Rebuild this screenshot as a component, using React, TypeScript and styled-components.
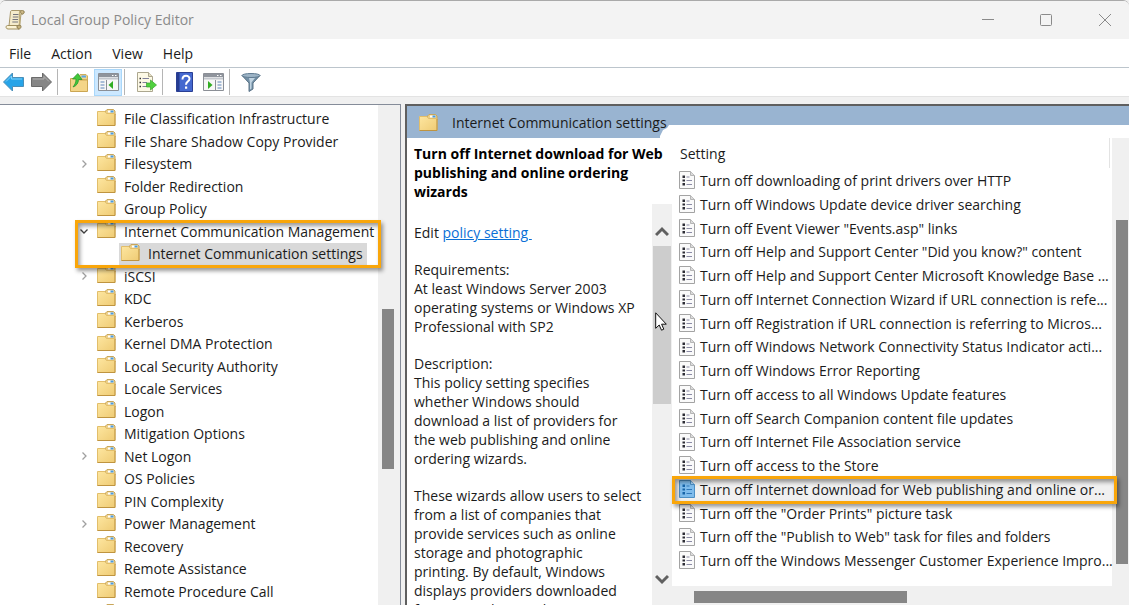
import React from "react";
import styled, { createGlobalStyle, css } from "styled-components";

const GlobalStyle = createGlobalStyle`
  * { box-sizing: border-box; }
  html, body { margin: 0; padding: 0; background: #f0f0f0; }
  body, button, table {
    font-family: "Open Sans", "Noto Sans", sans-serif;
    font-size: 14px;
    color: #1b1b1b;
  }
  button { border: 0; background: none; padding: 0; margin: 0; }
  svg { display: block; flex: none; }
`;

const Window = styled.div`
  display: flex;
  flex-direction: column;
  height: 100vh;
  overflow: hidden;
  background: #f0f0f0;
  border-top: 1px solid #a9a9a9;
  border-radius: 6px 6px 0 0;
`;

const TitleBar = styled.header`
  display: flex;
  align-items: center;
  height: 38px;
  flex: none;
  padding-left: 5px;
  background: #f3f3f3;
`;

const WindowTitle = styled.h1`
  flex: 1;
  margin: 0 0 0 5px;
  padding-bottom: 2px;
  font-size: 14px;
  font-weight: 400;
  color: #8b8b8b;
`;

const WindowButton = styled.button`
  display: flex;
  align-items: center;
  justify-content: center;
  width: 58px;
  height: 38px;
  &:last-child { width: 49px; margin-left: 5px; }
`;

const MenuBar = styled.nav`
  display: flex;
  align-items: center;
  gap: 20px;
  height: 29px;
  flex: none;
  padding: 1px 0 0 9px;
  background: #fff;
  border-bottom: 1px solid #bcc5cc;
`;

const ToolBar = styled.div`
  display: flex;
  align-items: center;
  gap: 1px;
  height: 28px;
  flex: none;
  background: #fff;
`;

const ToolButton = styled.button<{ $narrow?: boolean; $active?: boolean }>`
  display: flex;
  align-items: center;
  justify-content: center;
  width: ${(p) => (p.$narrow ? 27 : 28)}px;
  height: 27px;
  ${(p) =>
    p.$active &&
    css`
      background: #cce8ff;
      border: 1px solid #a9d7fa;
    `}
`;

const Separator = styled.span`
  width: 1px;
  height: 26px;
  margin: 0 6px 0 1px;
  background: #b5b5b5;
`;

const Workspace = styled.main`
  display: flex;
  gap: 4px;
  flex: 1;
  min-height: 0;
  border-top: 1px solid #e3e3e3;
  padding-top: 7px;
`;

const TreePane = styled.section`
  display: flex;
  width: 401px;
  flex: none;
  overflow: hidden;
  background: #fff;
  border-top: 1px solid #858c99;
  border-right: 1px solid #858c99;
`;

const Tree = styled.ul`
  flex: 1;
  list-style: none;
  margin: 0;
  padding: 2px 0 0 79px;
`;

const TreeItem = styled.li<{ $nested?: boolean }>`
  display: flex;
  align-items: center;
  position: relative;
  height: 23px;
  padding-left: ${(p) => (p.$nested ? 24 : 0)}px;
  &:nth-child(even) { height: 22px; }
`;

const Expander = styled.button`
  display: flex;
  align-items: center;
  justify-content: center;
  width: 10px;
  height: 18px;
  margin-right: 8px;
`;

const TreeLabel = styled.button<{ $selected?: boolean }>`
  display: flex;
  align-items: center;
  gap: 8px;
  height: 22px;
  padding-right: 4px;
  white-space: nowrap;
  ${(p) =>
    p.$selected &&
    css`
      margin-left: -2px;
      padding-left: 2px;
      background: #d9d9d9;
    `}
  svg { margin-bottom: 3px; }
`;

const Highlight = styled.span`
  position: absolute;
  z-index: 3;
  pointer-events: none;
  border: 3px solid #f9a60a;
  box-shadow: 2px 3px 4px rgba(0, 0, 0, 0.4), inset 2px 3px 4px rgba(0, 0, 0, 0.4);
`;

const TreeHighlight = styled(Highlight)`
  left: -4px;
  top: 0;
  width: 306px;
  height: 48px;
`;

const RowHighlight = styled(Highlight)`
  left: 0;
  right: -5px;
  top: -1px;
  height: 28px;
`;

const Track = styled.div<{ $before: number }>`
  width: 22px;
  flex: none;
  padding: ${(p) => p.$before}px 0 0 4px;
  background: #f0f0f0;
`;

const Thumb = styled.div<{ $length: number }>`
  width: 12px;
  height: ${(p) => p.$length}px;
  background: #868686;
`;

const ResultPane = styled.section`
  display: flex;
  flex-direction: column;
  flex: 1;
  min-width: 0;
  background: #fff;
  border: solid #5f5f5f;
  border-width: 2px 0 0 2px;
`;

const ResultHeader = styled.header`
  display: flex;
  align-items: center;
  gap: 14px;
  height: 32px;
  flex: none;
  padding-left: 12px;
  background: #99b4d1;
`;

const ResultTitle = styled.h2`
  position: relative;
  z-index: 2;
  margin: 0;
  font-size: 14px;
  font-weight: 400;
`;

const ResultBody = styled.div`
  display: flex;
  flex: 1;
  min-height: 0;
`;

const Detail = styled.article`
  display: flex;
  flex-direction: column;
  width: 265px;
  flex: none;
  padding: 6px 0 0 7px;
  line-height: 19px;
`;

const DetailTitle = styled.h3`
  margin: 0;
  font-size: 14px;
  font-weight: 700;
  line-height: 19px;
  color: #000;
  white-space: pre;
`;

const DetailScroller = styled.div`
  display: flex;
  flex: 1;
  min-height: 0;
  margin-top: 3px;
`;

const DetailText = styled.div`
  flex: 1;
  padding-top: 19px;
`;

const Paragraph = styled.p`
  margin: 0 0 18px;
  white-space: pre;
`;

const Link = styled.a`
  color: #0a6fd6;
  text-decoration: underline;
  white-space: pre;
`;

const DetailTrack = styled.div`
  display: flex;
  flex-direction: column;
  align-items: center;
  width: 20px;
  padding: 22px 0 20px;
  background: #f0f0f0;
`;

const DetailThumb = styled.div`
  width: 18px;
  height: 158px;
  margin: 9px 0 auto;
  background: #cdcdcd;
`;

const Extended = styled.div`
  position: relative;
  display: flex;
  flex-direction: column;
  flex: 1;
  min-width: 0;
  margin-top: -13px;
  background: #fff;
`;

const Corner = styled.svg`
  position: absolute;
  right: 100%;
  top: 0;
`;

const ListArea = styled.div`
  display: flex;
  flex: 1;
  min-height: 0;
`;

const SettingsTable = styled.table`
  display: block;
  flex: 1;
  min-width: 0;
  margin-top: 13px;
  thead, tbody { display: block; }
`;

const HeadRow = styled.tr`
  display: flex;
  align-items: center;
  height: 30px;
  margin-right: 2px;
  padding: 1px 0 0 8px;
  border-right: 1px solid #e3e3e3;
  th { font-weight: 400; padding: 0; }
`;

const SettingRow = styled.tr<{ $selected?: boolean }>`
  display: flex;
  position: relative;
  height: 24px;
  background: ${(p) => (p.$selected ? "#f0f0f0" : "transparent")};
  &:nth-child(4n) { height: 23px; }
`;

const SettingCell = styled.td`
  display: flex;
  align-items: center;
  gap: 5px;
  padding: 0 0 0 7px;
  white-space: nowrap;
`;

const ListTrack = styled(Track)`
  width: 17px;
  margin-top: 13px;
`;

const BottomTrack = styled.div`
  height: 19px;
  flex: none;
  margin-left: -20px;
  padding: 5px 0 0 42px;
  background: #f0f0f0;
`;

const BottomThumb = styled.div`
  width: 49%;
  height: 12px;
  background: #868686;
`;

const Pointer = styled.svg`
  position: absolute;
  left: -17px;
  top: 187px;
  z-index: 4;
`;

const Folder = () => (
  <svg width="19" height="17" viewBox="0 0 19 17">
    <defs>
      <linearGradient id="folderFace" x1="0" y1="0" x2="1" y2="1">
        <stop offset="0" stopColor="#fde6a0" />
        <stop offset="1" stopColor="#efcb74" />
      </linearGradient>
    </defs>
    <path d="M8.500 5V2l1.500-1.500h6.500L18 2v4z" fill="#ecd08a" stroke="#c9a65a" />
    <path d="M11 1.500h5.500V3.500H11z" fill="#fff" />
    <path d="M13.500 1.500h3v2h-3z" fill="#4b9bdf" />
    <path d="M.5 2.500h7.500l1.500 2h8.500v12H.5z" fill="url(#folderFace)" stroke="#e2be6a" />
    <path d="M.5 16.500H18V5" fill="none" stroke="#bf9440" />
  </svg>
);

const Chevron = ({ open }: { open?: boolean }) => (
  <svg width="10" height="10" viewBox="0 0 10 10" fill="none" stroke={open ? "#404040" : "#a0a0a0"} strokeWidth="1.3">
    <path d={open ? "M1.500 3.500 5 7l3.500-3.500" : "M3.500 1.500 7 5 3.500 8.500"} />
  </svg>
);

const PolicyIcon = ({ selected }: { selected?: boolean }) => (
  <svg width="16" height="18" viewBox="0 0 16 18">
    <path d="M.5.5h11l4 4v13H.5z" fill={selected ? "#7fbcec" : "#fafafa"} stroke={selected ? "#4c8fc4" : "#a3a3a3"} />
    <path d="M11.500.5v4h4" fill={selected ? "#a9d3f3" : "#dcdcdc"} stroke={selected ? "#4c8fc4" : "#b5b5b5"} />
    <path d="M3.500 4.500h2.500V7H3.500zM3.500 8.500h2.500v2H3.500zM3.500 12h2.500v2.500H3.500z" fill={selected ? "#1764a8" : "#2d2d35"} />
    <path d="M7.500 6h3M7.500 9.500H13M7.500 13.500H13" stroke={selected ? "#2f78ba" : "#8c8ca6"} />
  </svg>
);

const ScrollArrow = ({ down }: { down?: boolean }) => (
  <svg width="14" height="11" viewBox="0 0 14 11" fill="none" stroke="#606060" strokeWidth="3">
    <path d={down ? "M1 2l6 6 6-6" : "M1 9l6-6 6 6"} />
  </svg>
);

const ScrollIcon = () => (
  <svg width="21" height="20" viewBox="0 0 21 20">
    <path d="M5.500 2c0-1 .6-1.500 1.500-1.500h10.500c2 0 2 3 0 3.500h-1.500l-1.500 12H4z" fill="#f4ebcb" stroke="#a8986c" />
    <path d="M15 1c-1.200 4 .5 14-1 17" fill="none" stroke="#bfae7a" strokeWidth="1.600" />
    <path d="M16.500.5c-1.600.8-1 3.500 1 3.500s2-3.500 0-3.500" fill="#cdb987" stroke="#8f7f52" />
    <path d="M8 4.500h5.500M7.800 7h5.500M7.500 9.500H13M7.300 12H13" stroke="#74747c" />
    <path d="M2.500 15.500h10c-1 1.500 0 3.500 1.500 3.500H3c-2.500 0-2.500-3.500-.5-3.500z" fill="#fbf3d5" stroke="#a08f5f" />
    <path d="M12.500 15.500c2-.5 3.500-.5 3.500 1s-1 2.500-2 2.500-2.500-2-1.500-3.500z" fill="#c7b37c" stroke="#8f7f52" />
  </svg>
);

const ArrowIcon = ({ forward }: { forward?: boolean }) => (
  <svg width="21" height="20" viewBox="0 0 21 20">
    <path
      d={forward ? "M20.500 10 11.500 1v4.500H.5v9h11V19z" : "M.5 10l9-9v4.500h11v9h-11V19z"}
      fill={forward ? "#868686" : "#27a4e8"}
      stroke={forward ? "#6b6b6b" : "#4a8fb8"}
      strokeLinejoin="round"
    />
    <path
      d={forward ? "M2 7h11V4.500l5 5" : "M3 9.500l5.500-5.500v3H19"}
      fill="none"
      stroke={forward ? "#b0b0b0" : "#83d2fa"}
    />
  </svg>
);

const UpFolderIcon = () => (
  <svg width="20" height="20" viewBox="0 0 20 20">
    <path d="M9.500 7V4l1.500-1.500h6L18.500 4v4z" fill="#eed58e" stroke="#cfae5c" />
    <path d="M12.500 3.500h4.500V5.500h-4.500z" fill="#5ba7e8" />
    <path d="M1.500 6.500h8l1 1.500h8v11.500h-17z" fill="#f4d588" stroke="#cba653" />
    <path d="M4 15c3.500-1 5.500-4 5.500-7.500H13L8.800 1.500 3.500 7H7c0 3-1 5.500-3 8z" fill="#42c83a" stroke="#24902a" strokeWidth=".7" />
  </svg>
);

const PanelIcon = ({ mirrored }: { mirrored?: boolean }) => (
  <svg width="21" height="18" viewBox="0 0 21 18">
    <path d="M.5.5h20v17H.5z" fill="#f7f7f7" stroke="#8b8f96" />
    <path d="M1 1h19v3H1z" fill="#8f949c" />
    <path d="M14 2.500h1.500M17 2.500h1.500" stroke="#fff" />
    <path d="M1 5.500h19" stroke="#c3c7cd" strokeWidth="2" />
    {mirrored ? (
      <>
        <path d="M12.500 7v10" stroke="#8b8f96" />
        <path d="M14.500 9H18.500M14.500 12H18.500M14.500 15H18.500" stroke="#5d84b9" />
        <path d="M5 8v8l4.500-4z" fill="#32ad23" />
      </>
    ) : (
      <>
        <path d="M8.500 7v10" stroke="#8b8f96" />
        <path d="M2.500 9H6.500M2.500 12H6.500M2.500 15H6.500" stroke="#5d84b9" />
        <path d="M15 8v8l-4.500-4z" fill="#32ad23" />
      </>
    )}
  </svg>
);

const ExportIcon = () => (
  <svg width="21" height="20" viewBox="0 0 21 20">
    <path d="M1.500.5h11l4 4v15h-15z" fill="#fdf9e6" stroke="#aca78f" />
    <path d="M12.500.5v4h4" fill="#e5dfc5" stroke="#aca78f" />
    <path d="M3.500 6.500H5M3.500 10.500H5M3.500 14.500H5" stroke="#333" strokeWidth="1.500" />
    <path d="M6.500 6.500H13M6.500 10.500H11M6.500 14.500H11" stroke="#7f7f9a" />
    <path d="M10.500 11h4V8l6 5-6 5v-3h-4z" fill="#4fd03e" stroke="#38a52d" strokeWidth=".7" />
  </svg>
);

const HelpIcon = () => (
  <svg width="17" height="20" viewBox="0 0 17 20">
    <path d="M.5.5h16v19H.5z" fill="#4468cf" stroke="#2a3f94" />
    <path d="M1 1h2.500v18H1z" fill="#263c91" />
    <path d="M6.500 7.500c0-5 7-4.800 7-.8 0 3-3.500 2.800-3.500 6" fill="none" stroke="#fff" strokeWidth="2" />
    <path d="M9 14.500h2.200v2.300H9z" fill="#fff" />
  </svg>
);

const FilterIcon = () => (
  <svg width="20" height="19" viewBox="0 0 20 19">
    <path d="M1 2.500l7 7.500v8.500l4-2.500v-6l7-7.500z" fill="#7390a6" stroke="#5c7488" />
    <path d="M9 9.500v7l1.500-1V9.500L14 5H8z" fill="#c1d4e2" />
    <ellipse cx="10" cy="2.500" rx="9" ry="2" fill="#9db4c6" stroke="#607b91" />
  </svg>
);

type Node = { label: string; branch?: boolean; open?: boolean; nested?: boolean };

const nodes: Node[] = [
  { label: "File Classification Infrastructure" },
  { label: "File Share Shadow Copy Provider" },
  { label: "Filesystem", branch: true },
  { label: "Folder Redirection" },
  { label: "Group Policy" },
  { label: "Internet Communication Management", branch: true, open: true },
  { label: "Internet Communication settings", nested: true },
  { label: "iSCSI", branch: true },
  { label: "KDC" },
  { label: "Kerberos" },
  { label: "Kernel DMA Protection" },
  { label: "Local Security Authority" },
  { label: "Locale Services" },
  { label: "Logon" },
  { label: "Mitigation Options" },
  { label: "Net Logon", branch: true },
  { label: "OS Policies" },
  { label: "PIN Complexity" },
  { label: "Power Management", branch: true },
  { label: "Recovery" },
  { label: "Remote Assistance" },
  { label: "Remote Procedure Call" },
  { label: "" },
];

const settings = [
  "Turn off downloading of print drivers over HTTP",
  "Turn off Windows Update device driver searching",
  'Turn off Event Viewer "Events.asp" links',
  'Turn off Help and Support Center "Did you know?" content',
  "Turn off Help and Support Center Microsoft Knowledge Base ...",
  "Turn off Internet Connection Wizard if URL connection is refe...",
  "Turn off Registration if URL connection is referring to Micros...",
  "Turn off Windows Network Connectivity Status Indicator acti...",
  "Turn off Windows Error Reporting",
  "Turn off access to all Windows Update features",
  "Turn off Search Companion content file updates",
  "Turn off Internet File Association service",
  "Turn off access to the Store",
  "Turn off Internet download for Web publishing and online or...",
  'Turn off the "Order Prints" picture task',
  'Turn off the "Publish to Web" task for files and folders',
  "Turn off the Windows Messenger Customer Experience Impro...",
];

const selectedSetting = 13;

const paragraphs = [
  "Requirements:\nAt least Windows Server 2003\noperating systems or Windows XP\nProfessional with SP2",
  "Description:\nThis policy setting specifies\nwhether Windows should\ndownload a list of providers for\nthe web publishing and online\nordering wizards.",
  "These wizards allow users to select\nfrom a list of companies that\nprovide services such as online\nstorage and photographic\nprinting. By default, Windows\ndisplays providers downloaded\nfrom a Windows website in",
];

export default function App() {
  return (
    <Window>
      <GlobalStyle />
      <TitleBar>
        <ScrollIcon />
        <WindowTitle>Local Group Policy Editor</WindowTitle>
        <WindowButton aria-label="Minimize">
          <svg width="12" height="12" stroke="#8a8a8a"><path d="M0 5.500h12" /></svg>
        </WindowButton>
        <WindowButton aria-label="Maximize">
          <svg width="12" height="12" stroke="#8a8a8a" fill="none"><rect x=".5" y=".5" width="11" height="11" rx="1" /></svg>
        </WindowButton>
        <WindowButton aria-label="Close">
          <svg width="12" height="12" stroke="#8a8a8a"><path d="M0 0l12 12M12 0L0 12" /></svg>
        </WindowButton>
      </TitleBar>
      <MenuBar>
        {["File", "Action", "View", "Help"].map((m) => (
          <button key={m}>{m}</button>
        ))}
      </MenuBar>
      <ToolBar>
        <ToolButton $narrow aria-label="Back"><ArrowIcon /></ToolButton>
        <ToolButton $narrow aria-label="Forward"><ArrowIcon forward /></ToolButton>
        <Separator />
        <ToolButton aria-label="Up one level"><UpFolderIcon /></ToolButton>
        <ToolButton $active aria-label="Show or hide console tree"><PanelIcon /></ToolButton>
        <Separator />
        <ToolButton aria-label="Export list"><ExportIcon /></ToolButton>
        <Separator />
        <ToolButton aria-label="Help"><HelpIcon /></ToolButton>
        <ToolButton aria-label="Show or hide action pane"><PanelIcon mirrored /></ToolButton>
        <Separator />
        <ToolButton aria-label="Filter"><FilterIcon /></ToolButton>
      </ToolBar>
      <Workspace>
        <TreePane>
          <Tree>
            {nodes.map((n, i) => (
              <TreeItem key={i} $nested={n.nested}>
                <Expander aria-hidden={!n.branch} tabIndex={n.branch ? 0 : -1}>
                  {n.branch && <Chevron open={n.open} />}
                </Expander>
                <TreeLabel $selected={n.nested}>
                  <Folder />
                  {n.label}
                </TreeLabel>
                {n.open && <TreeHighlight />}
              </TreeItem>
            ))}
          </Tree>
          <Track $before={204}><Thumb $length={160} /></Track>
        </TreePane>
        <ResultPane>
          <ResultHeader>
            <Folder />
            <ResultTitle>Internet Communication settings</ResultTitle>
          </ResultHeader>
          <ResultBody>
            <Detail>
              <DetailTitle>{"Turn off Internet download for Web\npublishing and online ordering\nwizards"}</DetailTitle>
              <DetailScroller>
                <DetailText>
                  <Paragraph>
                    Edit <Link href="#edit">{"policy setting "}</Link>
                  </Paragraph>
                  {paragraphs.map((p) => (
                    <Paragraph key={p}>{p}</Paragraph>
                  ))}
                </DetailText>
                <DetailTrack>
                  <ScrollArrow />
                  <DetailThumb />
                  <ScrollArrow down />
                </DetailTrack>
              </DetailScroller>
            </Detail>
            <Extended>
              <Corner width="12" height="13" viewBox="0 0 12 13">
                <path d="M12 0H9L7 3 3 5 0 11v2h12z" fill="#fff" />
              </Corner>
              <ListArea>
                <SettingsTable>
                  <thead>
                    <HeadRow><th scope="col">Setting</th></HeadRow>
                  </thead>
                  <tbody>
                    {settings.map((s, i) => (
                      <SettingRow key={s} $selected={i === selectedSetting}>
                        <SettingCell>
                          <PolicyIcon selected={i === selectedSetting} />
                          {s}
                          {i === selectedSetting && <RowHighlight />}
                        </SettingCell>
                      </SettingRow>
                    ))}
                  </tbody>
                </SettingsTable>
                <ListTrack $before={82}><Thumb $length={344} /></ListTrack>
              </ListArea>
              <BottomTrack><BottomThumb /></BottomTrack>
              <Pointer width="12" height="19" viewBox="0 0 12 19">
                <path d="M.7.8v15.500l3.500-3.300 2.300 5.200 2.300-1-2.200-5h4.700z" fill="#fff" stroke="#111" />
              </Pointer>
            </Extended>
          </ResultBody>
        </ResultPane>
      </Workspace>
    </Window>
  );
}
